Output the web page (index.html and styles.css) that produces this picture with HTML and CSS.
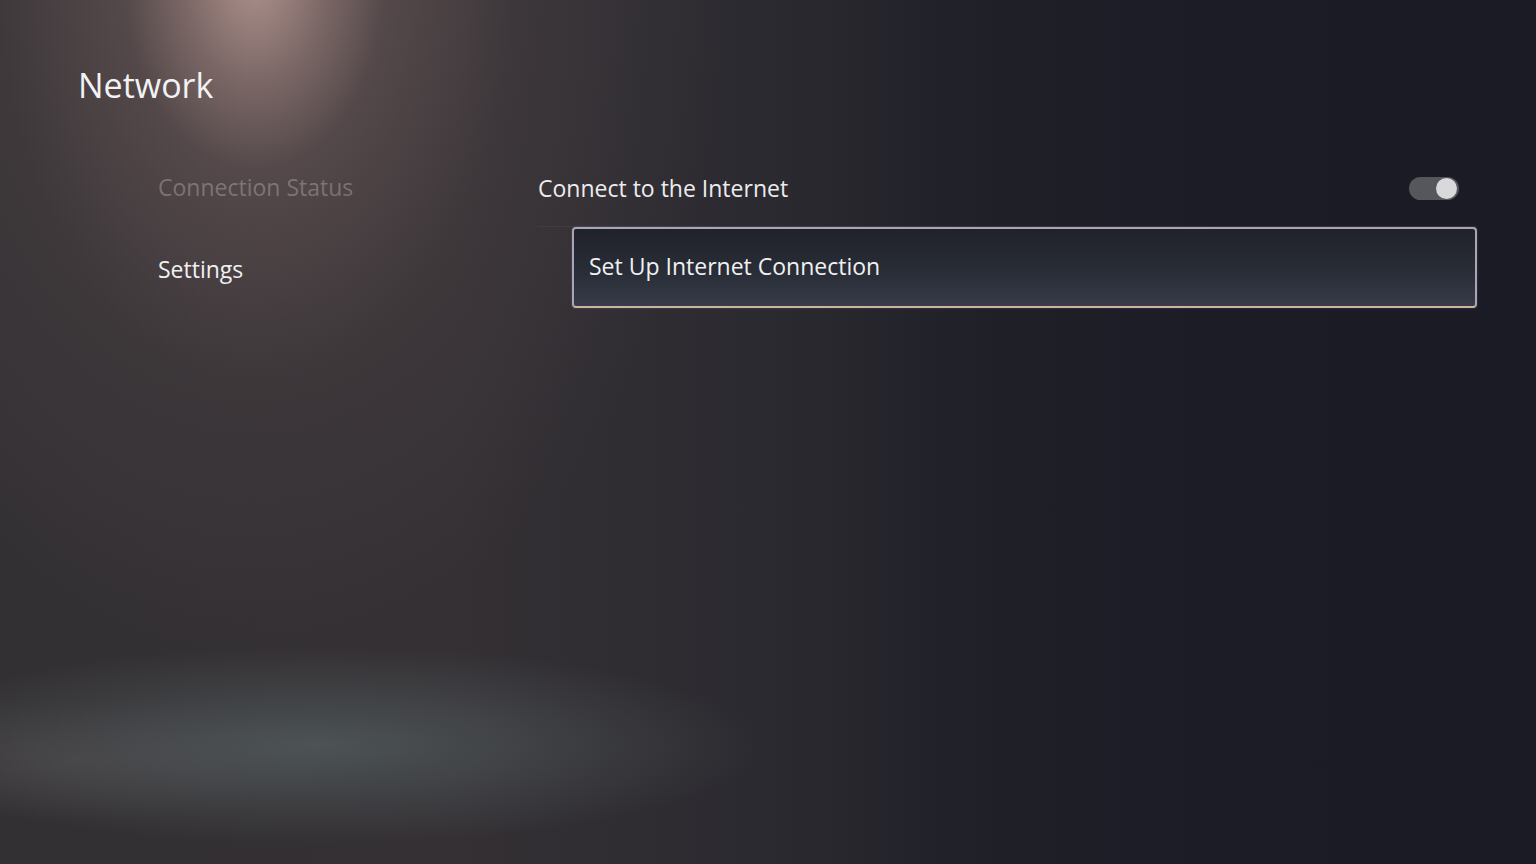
FILE: index.html
```html
<!DOCTYPE html>
<html lang="en">
<head>
  <meta charset="UTF-8">
  <meta name="viewport" content="width=device-width, initial-scale=1.0">
  <title>Network</title>
  <link rel="stylesheet" href="styles.css">
</head>
<body>
  <div class="screen">
    <h1 class="page-title">Network</h1>

    <div class="layout">
      <nav class="side-menu">
        <div class="menu-item dimmed">Connection Status</div>
        <div class="menu-item">Settings</div>
      </nav>

      <section class="options">
        <div class="option-row">
          <span class="option-label">Connect to the Internet</span>
          <span class="toggle on"><span class="toggle-knob"></span></span>
        </div>
        <div class="option-button focused">Set Up Internet Connection</div>
      </section>
    </div>
  </div>
</body>
</html>
```

FILE: styles.css
```css
* {
  box-sizing: border-box;
  margin: 0;
  padding: 0;
  font-family: "Open Sans", "Noto Sans", "Liberation Sans", sans-serif;
}

html, body {
  width: 100%;
  height: 100%;
}

body {
  overflow: hidden;
  color: #e8e8ea;
  background-color: #1b1c25;
  background-image:
    radial-gradient(ellipse 130px 190px at 255px -20px, rgba(220, 185, 175, 0.55), rgba(220, 185, 175, 0.2) 55%, rgba(220, 185, 175, 0) 100%),
    radial-gradient(ellipse 260px 420px at 255px -40px, rgba(160, 128, 124, 0.45), rgba(160, 128, 124, 0.15) 55%, rgba(160, 128, 124, 0) 100%),
    radial-gradient(ellipse 480px 700px at 250px -40px, rgba(120, 100, 100, 0.35), rgba(120, 100, 100, 0) 100%),
    radial-gradient(ellipse 440px 100px at 320px 745px, rgba(84, 94, 96, 0.75), rgba(84, 94, 96, 0) 100%),
    radial-gradient(ellipse 300px 60px at 80px 760px, rgba(90, 80, 84, 0.4), rgba(90, 80, 84, 0) 100%),
    linear-gradient(90deg, #333033 0%, #343034 30%, #2b2a30 50%, #1f1f28 65%, #1b1c25 80%, #1a1b24 100%);
}

.screen {
  display: flex;
  flex-direction: column;
  height: 100%;
}

.page-title {
  font-size: 34px;
  font-weight: 400;
  line-height: 40px;
  color: #f2f2f4;
  padding: 65px 0 0 78px;
}

.layout {
  display: flex;
  margin-top: 45px;
}

.side-menu {
  width: 538px;
  padding: 7px 0 0 158px;
  display: flex;
  flex-direction: column;
  gap: 22px;
}

.menu-item {
  font-size: 23px;
  line-height: 60px;
  color: #f0f0f2;
}

.menu-item.dimmed {
  color: rgba(255, 255, 255, 0.26);
}

.options {
  width: 939px;
  display: flex;
  flex-direction: column;
}

.option-row {
  height: 77px;
  display: flex;
  align-items: center;
  justify-content: space-between;
  padding-right: 18px;
  border-bottom: 1px solid rgba(255, 255, 255, 0.05);
}

.option-label {
  font-size: 23px;
  color: #ececee;
}

.toggle {
  width: 50px;
  height: 23px;
  border-radius: 12px;
  background: #56575c;
  display: flex;
  align-items: center;
  justify-content: flex-end;
  padding: 0 2px;
}

.toggle-knob {
  width: 21px;
  height: 21px;
  border-radius: 50%;
  background: #d9d9db;
}

.option-button {
  margin-left: 34px;
  height: 81px;
  display: flex;
  align-items: center;
  padding: 0 0 3px 15px;
  font-size: 23px;
  color: #f0f0f2;
  border-radius: 4px;
  background: linear-gradient(180deg, #1f222a 0%, #2a2e38 60%, #383c4a 100%);
}

.option-button.focused {
  border: 2px solid #a9a5b6;
  border-bottom-color: #cdb49e;
  box-shadow: 0 0 2px rgba(200, 190, 210, 0.3);
}
```
